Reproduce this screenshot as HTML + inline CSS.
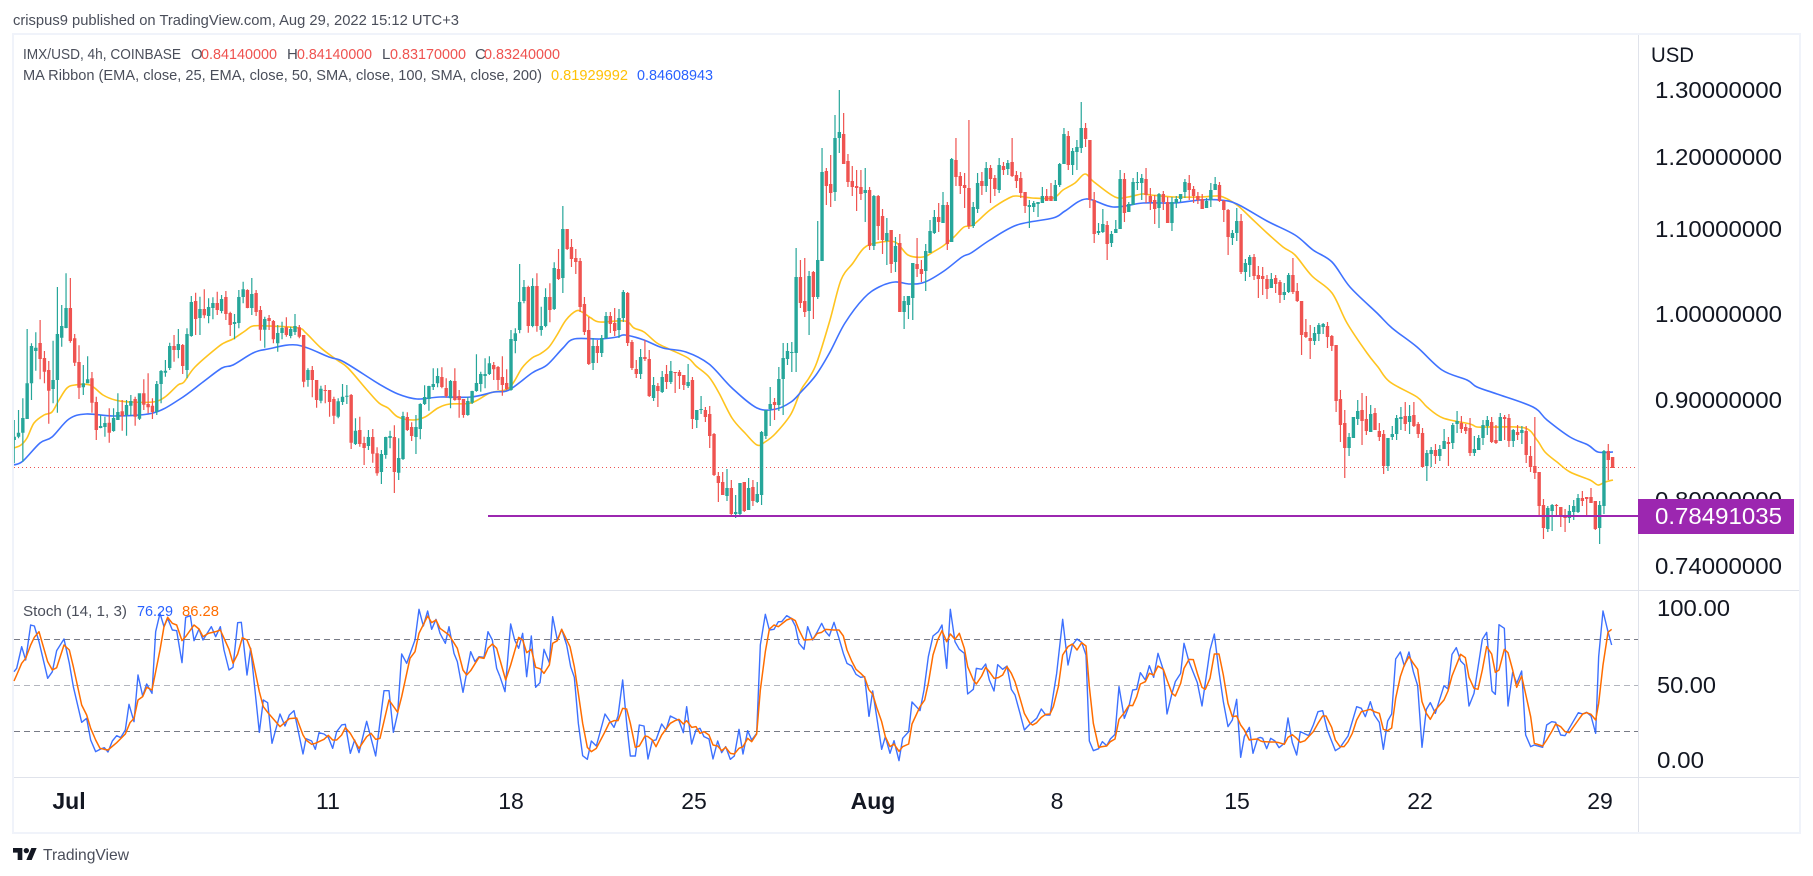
<!DOCTYPE html>
<html lang="en">
<head>
<meta charset="utf-8">
<title>IMX/USD chart</title>
<style>
html,body{margin:0;padding:0;background:#fff;width:1813px;height:876px;overflow:hidden}
svg{display:block;font-family:"Liberation Sans",Arial,sans-serif}
.lg{font-size:15px;fill:#4a4e5a}
.ax{font-size:23px;fill:#131722}
polyline,path.ma{fill:none;stroke-linejoin:round}
.sb{stroke:#2962ff;stroke-width:1.4;vector-effect:non-scaling-stroke;opacity:.9}
.so{stroke:#ff6d00;stroke-width:1.5;vector-effect:non-scaling-stroke}
</style>
</head>
<body>
<svg id="c" xmlns="http://www.w3.org/2000/svg" width="1813" height="876" viewBox="0 0 1813 876">
<defs><clipPath id="cp"><rect x="14" y="35" width="1624" height="555"/></clipPath></defs>
<rect width="1813" height="876" fill="#fff"/>
<!-- frame -->
<rect x="12" y="33" width="1789" height="2" fill="#f0f3fa"/>
<rect x="12" y="832" width="1789" height="2" fill="#f0f3fa"/>
<rect x="12" y="33" width="2" height="801" fill="#f0f3fa"/>
<rect x="1799" y="33" width="2" height="801" fill="#f0f3fa"/>
<rect x="14" y="590" width="1785" height="1" fill="#e0e3eb"/>
<rect x="14" y="777" width="1785" height="1" fill="#e0e3eb"/>
<rect x="1638" y="35" width="1" height="797" fill="#e0e3eb"/>

<text x="13" y="25" class="lg" textLength="446" lengthAdjust="spacingAndGlyphs">crispus9 published on TradingView.com, Aug 29, 2022 15:12 UTC+3</text>

<!-- last price dotted -->
<line x1="14" y1="467.5" x2="1638" y2="467.5" stroke="#ef5350" stroke-width="1" stroke-dasharray="1 3"/>

<!-- MA lines -->
<g clip-path="url(#cp)">
<path class="ma" stroke="#ffc41f" stroke-width="1.6" data-p="14,448 21,445 27,438 34,423 44,415 52,412 59,400 67,388 75,385 90,385 103,395 115,400 130,402 153,402 165,397 178,385 184,382 195,367 218,347 226,342 233,339 245,331 253,326 268,326 298,328 306,333 321,348 337,360 348,368 367,390 379,403 388,408 398,417 413,420 425,417 438,408 450,404 471,403 490,393 509,388 522,368 532,358 540,354 549,347 557,335 566,320 576,311 582,312 591,318 600,322 625,321 634,328 644,332 657,343 669,349 688,358 696,366 709,377 719,393 732,418 745,433 757,445 765,442 776,433 791,414 801,390 809,378 817,362 830,320 841,280 853,263 864,248 876,243 895,242 908,255 923,257 933,252 943,246 954,237 964,227 973,225 990,210 1009,198 1017,196 1032,198 1053,198 1063,190 1075,183 1085,174 1094,182 1115,197 1128,197 1142,194 1151,195 1174,197 1200,197 1215,196 1223,197 1237,205 1250,217 1267,233 1283,247 1295,255 1312,276 1332,293 1347,323 1367,353 1378,367 1390,382 1417,397 1427,407 1443,418 1470,424 1477,427 1493,427 1525,428 1537,440 1545,452 1557,462 1570,472 1590,480 1598,485 1605,482 1613,480"/>
<path class="ma" stroke="#3f72ff" stroke-width="1.6" data-p="14,465 23,461 40,443 52,437 69,419 86,414 115,416 153,413 180,399 203,382 222,368 233,365 253,353 268,349 297,345 329,357 344,362 379,384 398,394 417,399 440,397 471,397 494,392 509,390 532,373 547,365 563,348 574,339 600,339 617,337 625,335 644,340 663,348 686,352 709,364 732,388 757,408 776,409 791,402 801,392 816,375 830,352 845,323 864,298 879,287 895,282 910,284 925,282 944,271 962,257 971,253 990,240 1017,225 1053,218 1065,211 1086,199 1113,207 1143,203 1174,203 1200,200 1220,200 1237,204 1267,221 1295,235 1313,250 1332,262 1350,287 1377,313 1392,328 1417,347 1442,370 1467,380 1477,387 1497,394 1533,407 1547,420 1570,437 1588,445 1598,452 1613,452"/>
<g id="candles"></g>
</g>

<!-- purple horizontal -->
<rect x="488" y="515" width="1150" height="2" fill="#9c27b0"/>

<!-- legend -->
<text x="23" y="59" class="lg" textLength="158" lengthAdjust="spacingAndGlyphs">IMX/USD, 4h, COINBASE</text>
<text x="191" y="59" class="lg">O</text>
<text x="201" y="59" font-size="15" fill="#ef5350" textLength="76" lengthAdjust="spacingAndGlyphs">0.84140000</text>
<text x="287" y="59" class="lg">H</text>
<text x="297" y="59" font-size="15" fill="#ef5350" textLength="75" lengthAdjust="spacingAndGlyphs">0.84140000</text>
<text x="382" y="59" class="lg">L</text>
<text x="390" y="59" font-size="15" fill="#ef5350" textLength="76" lengthAdjust="spacingAndGlyphs">0.83170000</text>
<text x="475" y="59" class="lg">C</text>
<text x="484" y="59" font-size="15" fill="#ef5350" textLength="76" lengthAdjust="spacingAndGlyphs">0.83240000</text>
<text x="23" y="80" class="lg" textLength="519" lengthAdjust="spacingAndGlyphs">MA Ribbon (EMA, close, 25, EMA, close, 50, SMA, close, 100, SMA, close, 200)</text>
<text x="551" y="80" font-size="15" fill="#ffc107" textLength="77" lengthAdjust="spacingAndGlyphs">0.81929992</text>
<text x="637" y="80" font-size="15" fill="#2962ff" textLength="76" lengthAdjust="spacingAndGlyphs">0.84608943</text>

<!-- price axis -->
<text x="1651" y="62" class="ax" style="font-size:21px" textLength="43" lengthAdjust="spacingAndGlyphs">USD</text>
<text x="1655" y="98" class="ax" textLength="127" lengthAdjust="spacingAndGlyphs">1.30000000</text>
<text x="1655" y="165" class="ax" textLength="127" lengthAdjust="spacingAndGlyphs">1.20000000</text>
<text x="1655" y="237" class="ax" textLength="127" lengthAdjust="spacingAndGlyphs">1.10000000</text>
<text x="1655" y="322" class="ax" textLength="127" lengthAdjust="spacingAndGlyphs">1.00000000</text>
<text x="1655" y="408" class="ax" textLength="127" lengthAdjust="spacingAndGlyphs">0.90000000</text>
<text x="1655" y="508" class="ax" textLength="127" lengthAdjust="spacingAndGlyphs">0.80000000</text>
<text x="1655" y="574" class="ax" textLength="127" lengthAdjust="spacingAndGlyphs">0.74000000</text>
<rect x="1638" y="499" width="156" height="35" fill="#9c27b0"/>
<text x="1655" y="524" font-size="23" fill="#fff" textLength="127" lengthAdjust="spacingAndGlyphs">0.78491035</text>

<!-- stoch levels -->
<line x1="14" y1="639.5" x2="1638" y2="639.5" stroke="#787b86" stroke-dasharray="6 4"/>
<line x1="14" y1="685.5" x2="1638" y2="685.5" stroke="#b2b5be" stroke-dasharray="6 4"/>
<line x1="14" y1="731.5" x2="1638" y2="731.5" stroke="#787b86" stroke-dasharray="6 4"/>

<g transform="translate(0,580) scale(.33333)">
<polyline class="sb" points="42,275 50,265 65,200 77,240 92,135 103,138 117,185 143,295 157,275 170,212 192,177 208,250 220,320 245,427 260,415 272,480 287,515 300,508 313,503 324,516 337,483 350,467 362,473 376,450 387,373 402,425 414,285 428,348 440,312 456,340 467,155 480,100 492,140 503,115 517,150 530,152 546,248 557,112 571,107 582,182 597,147 609,180 634,140 647,170 661,140 672,210 687,270 699,262 713,128 724,127 741,285 752,205 778,457 790,360 803,368 816,490 840,402 855,438 868,405 882,392 909,522 918,476 935,483 946,508 957,458 972,462 985,472 998,505 1010,455 1025,435 1036,433 1051,520 1064,480 1077,518 1100,424 1127,528 1152,332 1167,332 1180,457 1193,400 1205,222 1220,250 1245,180 1257,88 1270,138 1283,93 1295,148 1308,118 1320,160 1336,190 1347,140 1362,220 1372,245 1389,337 1412,215 1425,245 1437,230 1452,232 1464,155 1477,180 1490,265 1500,290"/>
<polyline class="so" points="42,303 50,285 65,250 77,235 92,195 103,172 117,155 143,245 157,270 170,263 192,195 208,210 220,260 245,375 260,405 272,445 287,480 300,505 313,508 324,510 350,488 376,462 390,428 402,415 414,360 428,350 440,322 456,330 480,210 492,140 503,112 517,130 530,135 546,182 557,170 582,135 597,147 609,170 625,160 647,155 661,150 687,208 699,250 713,222 727,173 741,180 752,208 778,335 790,380 803,397 840,440 868,416 890,414 909,465 918,480 935,493 946,490 972,478 985,466 998,480 1010,480 1025,465 1036,443 1051,460 1077,505 1100,470 1113,460 1127,478 1140,475 1167,360 1193,397 1205,350 1230,235 1245,215 1257,160 1283,108 1295,128 1308,120 1320,145 1347,165 1372,205 1389,270 1400,285 1412,272 1437,232 1452,235 1464,205 1477,192 1490,205 1500,240"/>
</g>
<g transform="translate(470,590) scale(.33333)">
<polyline class="sb" points="90,260 105,305 122,102 134,150 146,175 158,130 170,260 184,138 197,292 210,278 222,178 238,218 248,80 262,150 275,118 290,165 302,230 313,262 325,400 338,497 352,508 364,453 379,468 405,372 432,412 444,378 458,270 470,400 481,498 496,498 508,405 522,408 534,507 547,452 558,450 575,402 588,420 601,378 615,385 627,392 640,428 650,350 665,462 678,420 690,415 702,440 717,447 729,507 743,453 755,488 767,470 781,508 793,498 807,418 819,492 833,422 845,450 860,430 871,165 886,73 898,120 912,118 925,95 935,95 950,77 964,85 976,108 987,160 1002,178 1013,110 1028,150 1042,125 1055,100 1067,125 1078,138 1092,97 1107,145 1120,190 1131,220 1145,228 1158,253 1172,262 1184,260 1197,380"/>
<polyline class="so" points="90,210 107,270 122,225 146,142 158,150 170,188 184,178 197,232 210,236 222,250 238,225 248,160 262,152 275,118 300,170 313,230 325,310 338,400 352,472 364,485 379,475 405,425 418,398 432,392 444,392 458,355 470,357 481,400 496,472 508,468 525,438 534,440 547,450 558,470 575,435 601,400 615,392 627,388 640,402 650,392 665,412 678,410 690,430 702,425 717,435 729,465 743,468 755,482 767,472 781,490 793,492 807,475 819,470 833,445 845,455 860,432 871,300 886,185 898,118 912,105 925,110 950,90 964,85 976,92 987,120 1002,150 1028,148 1042,130 1055,127 1067,118 1092,120 1107,120 1120,138 1131,180 1145,213 1158,238 1172,250 1184,262 1197,300"/>
</g>
<g transform="translate(860,590) scale(.33333)">
<polyline class="sb" points="27,380 38,303 50,380 65,478 76,440 90,490 102,452 117,512 128,445 146,425 156,336 180,362 192,300 205,200 219,138 235,125 246,105 260,235 271,58 285,155 298,178 313,190 323,312 340,298 349,235 365,238 377,222 388,270 402,303 413,224 428,238 441,228 454,298 465,315 480,370 493,420 510,402 530,385 544,357 557,375 570,375 590,250 608,88 624,225 637,165 651,147 665,157 678,195 688,453 700,482 716,476 727,455 740,467 751,447 765,433 777,290 793,385 807,348 818,300 830,298 841,248 856,270 868,227 881,262 894,190 910,240 921,372 936,310 946,275 962,250 972,160 987,215 1000,248 1012,278 1026,348 1050,180 1063,132 1077,245 1090,335 1104,410 1117,390 1130,328 1142,502 1153,440 1168,412 1179,490 1193,445 1200,442"/>
<polyline class="so" points="27,300 38,312 50,352 65,395 76,440 90,470 102,462 117,484 128,470 146,462 156,402 180,350 194,330 205,280 219,195 233,150 246,122 260,155 271,132 285,148 298,130 313,175 323,230 340,270 349,282 365,258 377,232 388,245 402,265 415,263 428,255 441,230 454,250 465,275 480,325 493,370 510,400 518,405 530,398 544,382 557,373 570,372 580,350 595,290 608,195 624,170 637,162 651,180 665,158 678,168 688,290 700,400 716,472 727,470 740,468 751,455 765,447 777,388 793,368 807,346 818,347 830,320 841,282 856,275 868,250 881,255 894,228 910,238 921,270 936,310 946,318 962,280 972,235 987,208 1000,209 1012,250 1026,292 1036,298 1050,265 1063,192 1077,192 1090,255 1104,340 1117,380 1130,378 1142,405 1153,420 1168,450 1179,448 1193,447 1200,452"/>
</g>
<g transform="translate(1250,590) scale(.33333)">
<polyline class="sb" points="30,442 38,445 50,476 62,445 75,453 87,473 103,460 114,384 127,458 140,495 151,425 176,437 190,405 204,365 218,362 232,420 256,482 270,473 294,438 320,350 334,355 346,380 361,335 373,375 388,397 400,478 413,393 425,372 437,207 451,186 463,228 477,186 490,245 503,287 516,472 529,358 541,338 556,370 582,287 594,297 606,193 619,173 632,213 644,225 657,348 672,310 697,148 710,127 726,303 736,313 747,104 763,115 774,348 788,247 800,280 815,243 827,435 842,470 853,465 878,472 890,405 905,395 917,397 932,435 945,437 985,368 998,372 1010,367 1023,378 1037,430 1046,200 1059,63 1074,125 1085,165"/>
<polyline class="so" points="30,452 38,455 62,456 75,456 87,458 103,463 114,442 127,434 140,445 151,457 165,452 176,440 190,425 204,400 218,378 228,378 245,412 256,450 270,470 282,470 294,455 307,430 320,390 334,365 346,362 361,358 373,365 388,370 400,418 413,422 425,414 437,325 451,260 463,225 477,200 490,220 503,238 516,335 529,370 541,388 556,360 582,330 594,303 606,258 632,193 646,203 657,262 672,295 684,298 697,240 710,170 725,192 736,247 747,240 763,178 774,188 788,240 800,292 815,258 842,380 853,460 878,468 890,450 905,425 917,402 932,410 945,425 958,428 985,390 998,372 1010,368 1023,373 1037,390 1046,340 1059,225 1074,127 1085,118"/>
</g>

<text x="23" y="616" class="lg" textLength="104" lengthAdjust="spacingAndGlyphs">Stoch (14, 1, 3)</text>
<text x="137" y="616" font-size="15" fill="#2962ff" textLength="36" lengthAdjust="spacingAndGlyphs">76.29</text>
<text x="182" y="616" font-size="15" fill="#ff6d00" textLength="37" lengthAdjust="spacingAndGlyphs">86.28</text>

<text x="1657" y="616" class="ax" textLength="73" lengthAdjust="spacingAndGlyphs">100.00</text>
<text x="1657" y="693" class="ax" textLength="59" lengthAdjust="spacingAndGlyphs">50.00</text>
<text x="1657" y="768" class="ax" textLength="47" lengthAdjust="spacingAndGlyphs">0.00</text>

<!-- time axis -->
<g text-anchor="middle">
<text x="69" y="809" class="ax" font-weight="bold">Jul</text>
<text x="328" y="809" class="ax">11</text>
<text x="511" y="809" class="ax">18</text>
<text x="694" y="809" class="ax">25</text>
<text x="873" y="809" class="ax" font-weight="bold">Aug</text>
<text x="1057" y="809" class="ax">8</text>
<text x="1237" y="809" class="ax">15</text>
<text x="1420" y="809" class="ax">22</text>
<text x="1600" y="809" class="ax">29</text>
</g>

<!-- footer logo -->
<g transform="translate(13,845.3) scale(.667)" fill="#131722">
<path d="M14 22H7V11H0V4h14v18zM28 22h-8l7.5-18h8L28 22z"/><circle cx="20" cy="8" r="4"/>
</g>
<text x="43" y="860" font-size="16" fill="#4a4e5a" textLength="86" lengthAdjust="spacingAndGlyphs">TradingView</text>
</svg>
<script>
(function(){
var A="g540,590,600,670 g510,578,590,595 g475,534,578,665 g267,430,537,537 g310,318,430,480 g277,323,333,392 r240,309,357,418 r333,354,395,430 r363,390,452,551 g302,420,447,490 g141,282,420,518 g195,258,293,320 g100,204,264,265 r114,204,303,308 r282,295,368,378 r316,366,443,477 g375,430,442,465 g349,418,430,430 r396,415,488,518 r470,486,570,600 g525,558,564,565 g530,549,561,590 r505,548,578,608 g505,534,573,575 g460,516,540,540 r480,514,528,572 g480,495,525,587 g465,483,497,527 r470,477,530,557 g460,460,536,540 r418,460,494,510 r400,492,502,520 r475,497,516,537 g423,432,515,525 g390,393,432,490 g360,392,398,410 g308,318,384,390 r285,318,330,365 g267,312,330,355 r312,315,378,402 g265,282,390,415 g168,186,288,290 r158,183,237,285 g170,207,234,285 r148,207,226,235 g175,201,228,250 g172,189,204,238 r155,189,210,225 g165,177,213,220 r153,171,222,240 r215,219,255,288 g222,246,252,298 g150,171,249,265 g125,148,171,190 r148,150,204,205 g114,162,204,225 r150,159,216,228 r198,210,269,302 g230,237,269,323 r225,234,243,270 r240,243,298,310 g255,279,310,335 g245,264,279,298 r232,262,285,290 g260,267,288,295 g222,258,276,285 r255,262,290,295 r285,285,425,442 g385,390,420,440 r378,390,420,472 r420,420,480,503 g437,446,482,490 r435,450,453,490 r450,450,486,530 r470,477,527,552 g475,484,530,535 g432,470,486,495 g435,467,470,492 r462,465,608,627 g535,572,612,615 r530,570,612,620 r590,609,624,675 g570,591,618,630 r567,591,641,668 r622,640,700,707 g630,642,696,732 g590,591,645,656 g572,588,594,625 r556,591,696,759 g595,654,698,720 g515,528,657,660 r517,531,570,573 r547,561,588,603 g525,561,591,642 g490,492,567,598 g436,471,492,495 g437,438,477,512 g385,432,441,450 g385,408,430,442 r382,411,441,445 r415,444,468,473 g420,423,475,505 r385,423,480,482 r450,468,480,533 r477,477,525,533 g470,483,525,527 g452,453,488,492 g343,429,453,455 g395,402,432,455 g355,402,408,445 g349,370,402,405 r366,375,388,420 r378,381,420,450 r349,411,435,467 r388,429,447,450 g270,297,450,452 g265,280,303,340 g72,186,270,280 g120,141,183,190 r137,141,258,278 g115,138,258,262 r100,138,258,275 g200,258,270,287 g145,171,258,262 r130,171,210,247 g67,84,207,210".split(" ");
var B="r249,269,279,280 g206,229,278,293 r229,229,249,250 r239,247,259,267 r249,258,262,274 r258,261,307,312 r297,304,332,335 r317,330,364,365 g338,346,363,370 r340,346,353,363 g335,338,353,357 g312,316,338,339 r312,316,324,333 r308,323,331,336 g309,318,330,338 g290,292,318,322 r292,293,343,346 r340,342,368,370 r360,369,374,378 g349,357,374,379 r340,357,359,361 r350,359,396,397 g377,385,398,401 r383,386,391,407 g371,377,392,393 r365,374,382,389 g361,371,382,384 r372,372,373,393 r370,372,376,389 r375,375,385,390 g364,382,386,388 r377,380,419,429 g410,410,420,428 g396,409,410,414 r407,410,417,422 r406,414,436,448 r433,434,475,476 r472,476,483,502 r472,482,495,495 g469,488,496,501 r480,488,514,515 g495,512,514,518 g483,483,514,516 r482,482,511,512 g478,488,510,510 r480,487,501,506 g482,494,502,503 g431,432,495,505 g410,410,436,439 g387,404,409,426 r398,402,405,420 g367,379,405,411 g343,358,379,415 g343,351,359,365 g342,352,353,372 g248,277,353,372 r260,277,303,308 r258,301,312,317 g271,276,311,335 r271,272,297,319 g221,260,297,299 g148,172,261,261 r168,171,186,205 r155,184,193,207 g115,138,192,201 g90,132,138,153 r113,134,164,164 r154,161,182,187 r166,181,187,196 r170,186,188,211 r170,187,194,200 g168,190,193,222 r187,190,246,250 g195,196,246,250 r195,196,226,240 r209,216,240,254 g218,233,241,265 r230,230,264,273 g237,246,262,272 r234,243,312,312 g296,301,312,329 g296,296,305,319 g263,263,298,320 r238,264,269,277 r260,269,274,282 g244,251,271,291 g220,231,253,253 g210,217,233,234 r203,217,222,232 g192,205,223,223 r202,205,244,250 g158,159,242,242 r138,160,177,186 r172,176,186,194 r173,185,188,208 r120,188,226,229 g202,207,226,228 g173,183,209,213 r172,181,186,195 g162,168,186,192 r165,168,179,203 r175,178,189,196 g158,165,190,193 r162,166,170,175 g160,163,169,175 r138,162,176,177 r171,175,181,188 r172,178,193,198 r192,192,206,213 g200,205,207,228 g201,203,207,212 g202,202,204,217 g187,196,203,203 r189,196,201,201 r183,196,201,201 g180,185,201,201 g163,164,185,187 g128,134,164,164 r131,136,165,170 g148,151,165,175 g140,147,152,170 g102,128,148,153 r123,128,139,147 r140,140,200,208 r192,200,234,243 g223,231,233,235 g209,224,232,233 r221,225,244,260 g231,234,243,247 g220,229,233,233 g170,179,229,229 r173,179,213,222 g202,204,212,212 g178,182,205,205 g172,182,183,190 g174,178,183,200 r168,179,195,203 r188,196,202,210 r195,200,209,224 g193,194,208,228 r191,194,202,210 r197,202,223,223 g197,202,223,231 g196,199,203,208 g194,194,199,202 g179,182,192,198 r175,183,190,200 r186,189,196,203 r192,196,200,204 r194,199,209,209 g198,201,208,208 g183,190,200,207 g177,184,190,190 r182,185,201,202 r200,201,210,222 r209,210,237,255 g230,233,238,245 g208,221,233,241 r214,221,272,274 g259,263,272,281 g255,257,265,277 r254,257,276,280 r266,275,279,298 r267,276,279,295 r275,279,289,299 g273,279,288,288 r275,278,284,293 r280,282,295,303 g283,292,295,300 g273,275,292,293 r258,275,292,294 r283,291,301,302 r301,301,335,355 r319,332,337,338 r325,338,341,359 g327,333,341,345 g323,325,334,341 g323,324,327,334 r322,326,337,348 r335,336,346,351 r345,345,401,412 r390,399,425,442 r410,423,448,478 g433,437,448,456 g417,417,438,438 g400,411,419,425 r393,410,421,445 r396,419,431,435 g405,414,432,432 r408,413,430,430 r423,431,437,441 r430,434,466,474 g438,438,466,471 g426,434,437,440 g415,418,434,440 g407,417,419,430 r402,416,424,431 g405,416,422,434 r402,415,426,427 r422,424,434,438 r428,433,467,467 g450,453,466,481 g447,450,454,467 r444,450,456,464 g445,449,456,461 g429,441,449,449 r437,442,444,466 g423,425,443,449 g411,421,424,433 r416,423,429,433 r424,427,431,434 r418,428,453,456 g436,449,453,456 g435,438,450,450 g420,425,438,445 g416,420,426,435 r417,422,442,443 r425,440,443,444 g413,417,441,441 r415,417,419,440 r414,418,441,447 g429,430,441,447 r425,432,435,440 g426,430,433,444 r426,431,455,463 r446,456,467,472 r417,466,473,479 r472,472,506,517 r499,505,528,539 g506,508,529,532 g504,505,511,531 r504,505,506,516 r507,507,516,527 r509,515,518,532 g505,511,518,523 g500,506,512,520 g494,498,512,513 r491,498,501,506 r497,497,499,517 r488,497,503,503 r501,501,529,530 g501,505,528,544 g450,451,506,514 r444,451,460,480 r457,457,468,468".split(" ");
var all=A.map(function(t){return [t[0]].concat(t.slice(1).split(",").map(function(v){return 240+v/3}))})
 .concat(B.map(function(t){return [t[0]].concat(t.slice(1).split(",").map(Number))}));
var g="",r="",gb="",rb="";
all.forEach(function(c,i){
 var x=14.2+4.32*i,hi=c[1],t=c[2],b=c[3],lo=c[4];
 if(b-t<1)b=t+1;
 if(lo<b)lo=b; if(hi>t)hi=t;
 var w="M"+(x-.6).toFixed(2)+" "+hi.toFixed(1)+"h1.2V"+lo.toFixed(1)+"h-1.2z",bd="M"+(x-1.7).toFixed(2)+" "+t.toFixed(1)+"h3.4V"+b.toFixed(1)+"h-3.4z";
 if(c[0]=="g"){g+=w;gb+=bd}else{r+=w;rb+=bd}
});
document.getElementById("candles").innerHTML='<path fill="#26a69a" d="'+g+gb+'"/><path fill="#ef5350" d="'+r+rb+'"/>';
/* smooth the moving averages (Catmull-Rom to bezier) */
[].forEach.call(document.querySelectorAll("path.ma"),function(el){
 var p=el.getAttribute("data-p").split(" ").map(function(s){return s.split(",").map(Number)});
 var d="M"+p[0][0]+" "+p[0][1];
 for(var i=0;i<p.length-1;i++){
  var a=p[Math.max(i-1,0)],b=p[i],c=p[i+1],e=p[Math.min(i+2,p.length-1)];
  d+="C"+(b[0]+(c[0]-a[0])/6).toFixed(1)+" "+(b[1]+(c[1]-a[1])/6).toFixed(1)+" "+(c[0]-(e[0]-b[0])/6).toFixed(1)+" "+(c[1]-(e[1]-b[1])/6).toFixed(1)+" "+c[0]+" "+c[1];
 }
 el.setAttribute("d",d);
 el.removeAttribute("data-p");
});
})();
</script>
</body>
</html>
